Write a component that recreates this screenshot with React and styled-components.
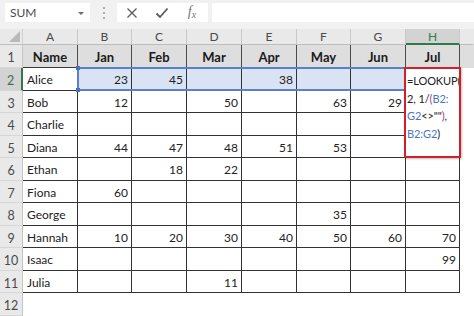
import { createGlobalStyle, styled } from 'styled-components';

const COLS = [23, 55, 54, 55, 55, 55, 54, 55, 54, 14];
const ROWS = [16, 23, 23, 22, 23, 22, 23, 22, 23, 22, 23, 22, 23];
const LETTERS = ['A', 'B', 'C', 'D', 'E', 'F', 'G', 'H'];

// rows 2..11, columns A..H ('' = empty)
const data = [
    ['Alice', 23, 45, '', 38, '', '', ''],
    ['Bob', 12, '', 50, '', 63, 29, ''],
    ['Charlie', '', '', '', '', '', '', ''],
    ['Diana', 44, 47, 48, 51, 53, '', ''],
    ['Ethan', '', 18, 22, '', '', '', ''],
    ['Fiona', 60, '', '', '', '', '', ''],
    ['George', '', '', '', '', 35, '', ''],
    ['Hannah', 10, 20, 30, 40, 50, 60, 70],
    ['Isaac', '', '', '', '', '', '', 99],
    ['Julia', '', '', 11, '', '', '', ''],
];
const headers = ['Name', 'Jan', 'Feb', 'Mar', 'Apr', 'May', 'Jun', 'Jul'];

const GlobalStyle = createGlobalStyle`
    html, body {
        margin: 0;
        padding: 0;
        background: #fff;
        overflow: hidden;
    }
    body {
        font-family: Lato, "Liberation Sans", Arial, sans-serif;
    }
`;

const App = () => {
    return (
        <Page>
            <GlobalStyle />
            <Toolbar>
                <NameBox>
                    SUM
                    <Caret />
                </NameBox>
                <Grip>
                    <i />
                    <i />
                    <i />
                </Grip>
                <ButtonsBox>
                    <IconSlot>
                        <svg width="12" height="12" viewBox="0 0 12 12">
                            <path
                                d="M1.5 1.5 L10.5 10.5 M10.5 1.5 L1.5 10.5"
                                stroke="#5a5a5a"
                                strokeWidth="1.3"
                                fill="none"
                            />
                        </svg>
                    </IconSlot>
                    <IconSlot>
                        <svg width="14" height="12" viewBox="0 0 14 12">
                            <path
                                d="M1.5 6.5 L5 10 L12.5 1.5"
                                stroke="#5a5a5a"
                                strokeWidth="1.8"
                                fill="none"
                            />
                        </svg>
                    </IconSlot>
                    <IconSlot>
                        <Fx>
                            f<sub>x</sub>
                        </Fx>
                    </IconSlot>
                </ButtonsBox>
                <FormulaInput />
            </Toolbar>

            <Sheet>
                <Corner>
                    <svg width="11" height="11" viewBox="0 0 11 11">
                        <path d="M11 0 L11 11 L0 11 Z" fill="#b9b9b9" />
                    </svg>
                </Corner>
                {LETTERS.map((l) => (
                    <ColHead key={l} $active={l === 'H'}>
                        {l}
                    </ColHead>
                ))}
                <ColHead $blank />

                <RowHead>1</RowHead>
                {headers.map((h) => (
                    <TitleCell key={h}>{h}</TitleCell>
                ))}
                <TitleCell $outside />

                {data.map((row, r) => (
                    <Row key={r} index={r + 2} row={row} />
                ))}

                <RowHead>12</RowHead>
                <EmptyRow />

                <RangeBox>
                    <Handle $top />
                    <Handle />
                </RangeBox>
                <Editor>
                    <div>=LOOKUP(</div>
                    <div>
                        2, 1/<Par>(</Par>
                        <Ref>B2:</Ref>
                    </div>
                    <div>
                        <Ref>G2</Ref>&lt;&gt;""<Par>)</Par>,
                    </div>
                    <div>
                        <Ref>B2:G2</Ref>)
                    </div>
                </Editor>
            </Sheet>
        </Page>
    );
};

const Row = ({ index, row }) => (
    <>
        <RowHead $active={index === 2}>{index}</RowHead>
        {row.map((v, c) => (
            <Cell
                key={c}
                $num={typeof v === 'number'}
                $picked={index === 2 && c > 0 && c < 7}
            >
                {v}
            </Cell>
        ))}
        <Outside />
    </>
);

const Page = styled.div`
    width: 474px;
    height: 316px;
    overflow: hidden;
    background: #fff;
`;

const Toolbar = styled.div`
    box-sizing: border-box;
    height: 29px;
    display: flex;
    align-items: flex-start;
    padding: 3px 0 0 5px;
    background: #f1f1f1;
`;

const NameBox = styled.div`
    box-sizing: border-box;
    width: 85px;
    height: 19px;
    display: flex;
    align-items: center;
    justify-content: space-between;
    padding: 0 6px 0 5px;
    background: #fff;
    color: #4a4a4a;
    font-size: 12px;
`;

const Caret = styled.span`
    width: 0;
    height: 0;
    border-left: 3px solid transparent;
    border-right: 3px solid transparent;
    border-top: 3px solid #6a6a6a;
    margin-top: 1px;
`;

const Grip = styled.div`
    width: 27px;
    height: 19px;
    display: flex;
    flex-direction: column;
    align-items: center;
    justify-content: center;
    gap: 3px;

    i {
        width: 2px;
        height: 2px;
        background: #b0b0b0;
    }
`;

const ButtonsBox = styled.div`
    width: 91px;
    height: 19px;
    display: grid;
    grid-template-columns: repeat(3, 30px);
    background: #fff;
`;

const IconSlot = styled.div`
    display: flex;
    align-items: center;
    justify-content: center;
`;

const Fx = styled.span`
    font-family: 'Liberation Serif', 'DejaVu Serif', serif;
    font-style: italic;
    font-size: 14px;
    color: #777;
    line-height: 1;

    sub {
        font-size: 10px;
        vertical-align: -2px;
    }
`;

const FormulaInput = styled.div`
    flex: 1;
    height: 19px;
    margin-left: 4px;
    background: #fff;
`;

const Sheet = styled.div`
    position: relative;
    display: grid;
    grid-template-columns: ${COLS.map((w) => `${w}px`).join(' ')};
    grid-template-rows: ${ROWS.map((h) => `${h}px`).join(' ')};
    font-size: 12px;
    color: #222;
`;

const Corner = styled.div`
    box-sizing: border-box;
    display: flex;
    align-items: flex-end;
    justify-content: flex-end;
    padding: 0 2px 2px 0;
    background: #e9e9e9;
    border-right: 1px solid #cfcfcf;
    border-bottom: 1px solid #bdbdbd;
`;

const ColHead = styled.div`
    box-sizing: border-box;
    display: flex;
    align-items: center;
    justify-content: center;
    font-size: 12px;
    color: ${(p) => (p.$active ? '#2f7a4d' : '#4a4a4a')};
    background: ${(p) => (p.$active ? '#d3d3d3' : '#e9e9e9')};
    border-right: 1px solid ${(p) => (p.$blank ? 'transparent' : '#c9c9c9')};
    border-bottom: ${(p) =>
        p.$active ? '2px solid #2f7a4d' : '1px solid #bdbdbd'};
`;

const RowHead = styled.div`
    box-sizing: border-box;
    display: flex;
    align-items: center;
    justify-content: center;
    padding-top: 3px;
    font-size: 12.5px;
    color: ${(p) => (p.$active ? '#3f6e52' : '#4a4a4a')};
    background: ${(p) => (p.$active ? '#d3d3d3' : '#e9e9e9')};
    border-right: ${(p) =>
        p.$active ? '2px solid #2f7a4d' : '1px solid #c4c4c4'};
    border-bottom: 1px solid #d6d6d6;
`;

const TitleCell = styled.div`
    box-sizing: border-box;
    display: flex;
    align-items: center;
    justify-content: center;
    padding-top: 2px;
    font-size: 13px;
    font-weight: 700;
    color: #1a1a1a;
    background: #dedede;
    border-right: 1px solid
        ${(p) => (p.$outside ? 'transparent' : '#4a4a4a')};
    border-bottom: 1px solid
        ${(p) => (p.$outside ? 'transparent' : '#3a3a3a')};
`;

const Cell = styled.div`
    box-sizing: border-box;
    display: flex;
    align-items: center;
    justify-content: ${(p) => (p.$num ? 'flex-end' : 'flex-start')};
    padding: 1px 3px 0 4px;
    white-space: nowrap;
    overflow: hidden;
    background: ${(p) => (p.$picked ? '#dae3f3' : '#fff')};
    border-right: 1px solid #333;
    border-bottom: 1px solid #333;
`;

const Outside = styled.div`
    background: #fff;
`;

const EmptyRow = styled.div`
    grid-column: 2 / -1;
    background: #fff;
`;

const RangeBox = styled.div`
    position: absolute;
    left: 77px;
    top: 38px;
    width: 330px;
    height: 24px;
    box-sizing: border-box;
    border: 2px solid #5b7fcc;
    pointer-events: none;
`;

const Handle = styled.span`
    position: absolute;
    left: -3px;
    ${(p) => (p.$top ? 'top: -3px;' : 'bottom: -3px;')}
    width: 4px;
    height: 4px;
    background: #4a70c2;
`;

const Editor = styled.div`
    position: absolute;
    left: 404px;
    top: 38px;
    width: 57px;
    height: 91px;
    box-sizing: border-box;
    padding: 3px 0 0 1px;
    border: 2px solid #d2202a;
    background: #fff;
    box-shadow: 1px 1px 2px rgba(0, 0, 0, 0.25);
    font-size: 11px;
    letter-spacing: -0.1px;
    line-height: 17.5px;
    white-space: nowrap;
    overflow: hidden;
    color: #222;
`;

const Ref = styled.span`
    color: #4a78c8;
`;

const Par = styled.span`
    color: #9b3a8c;
`;

export default App;
